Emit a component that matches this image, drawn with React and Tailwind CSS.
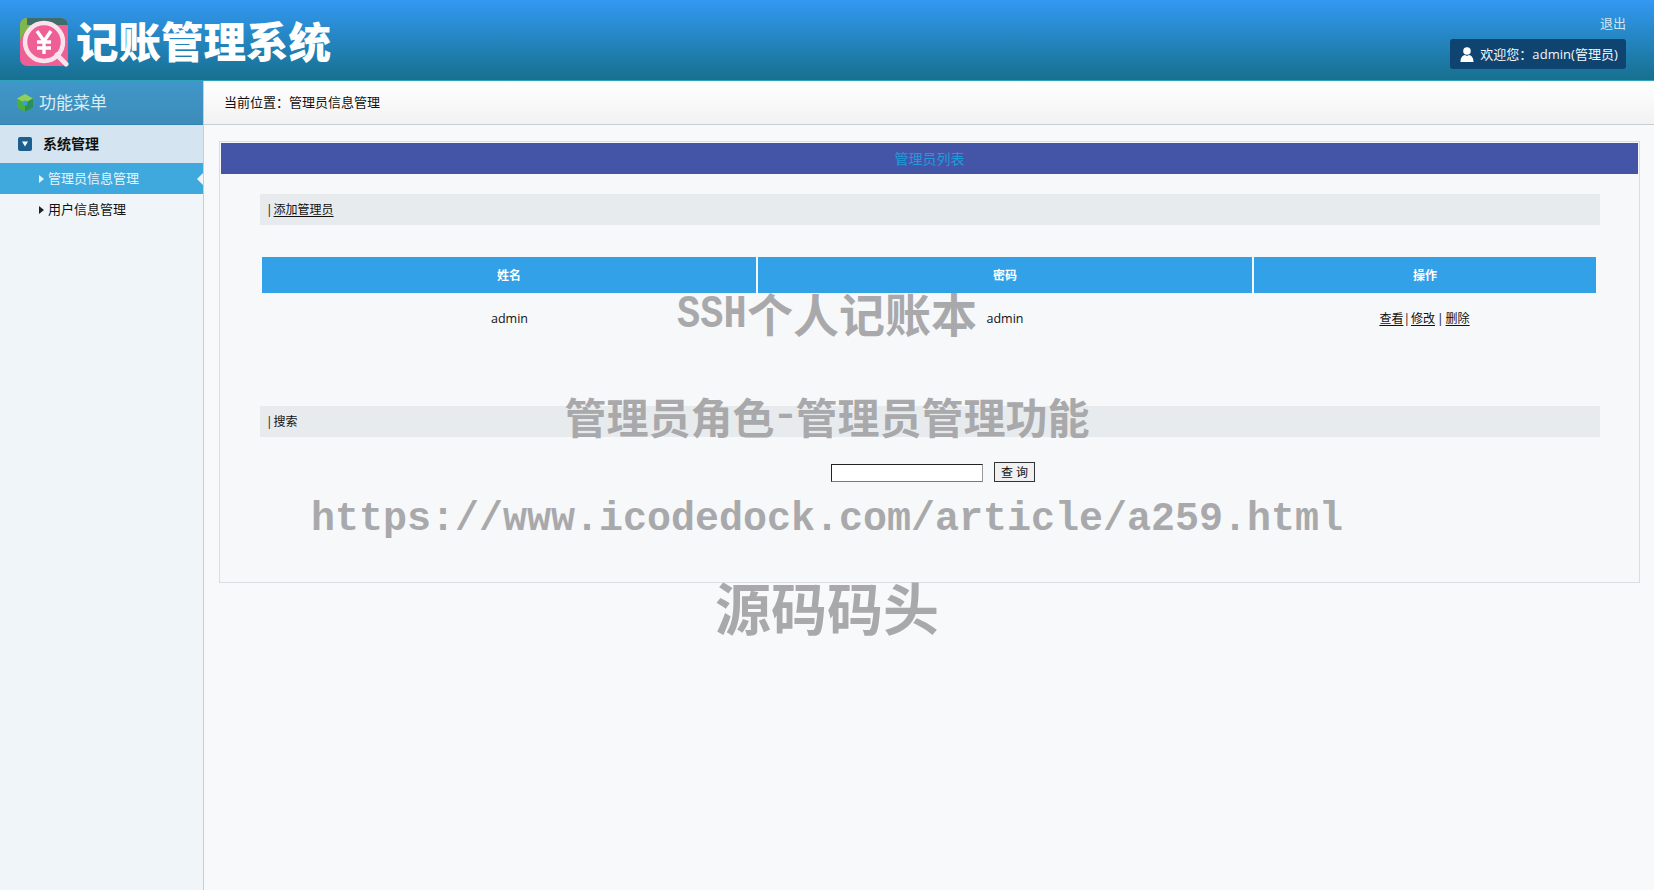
import React from "react";

function Logo() {
  return (
    <svg width="50" height="50" viewBox="0 0 50 50" className="shrink-0">
      <rect x="1" y="1" width="48" height="48" rx="7" fill="#ee5f96" />
      <path d="M1 24 V8 a7 7 0 0 1 7 -7 H42 a7 7 0 0 1 7 7 V8 H24 C12 8 4 14 1 24z" fill="#7cb84a" />
      <path d="M8 1 H42 a7 7 0 0 1 7 7 H8z" fill="#3f6d6b" />
      <circle cx="25" cy="25" r="19" fill="#ee5f96" stroke="#fbe3ec" strokeWidth="4.5" />
      <path d="M38 38 L47 47" stroke="#fbe3ec" strokeWidth="5" strokeLinecap="round" />
      <path d="M18 14 L25 24 L32 14 M25 24 V37 M18 25 H32 M18 31 H32" stroke="#fff" strokeWidth="3.4" fill="none" />
    </svg>
  );
}

function Cube() {
  return (
    <svg width="18" height="20" viewBox="0 0 18 20" className="shrink-0">
      <path d="M9 1 L17 5.5 V14.5 L9 19 L1 14.5 V5.5z" fill="#4caf3c" />
      <path d="M9 1 L17 5.5 L9 10 L1 5.5z" fill="#8ed05a" />
      <path d="M9 10 L17 5.5 V14.5 L9 19z" fill="#2a8f5f" />
      <circle cx="9" cy="10" r="2.6" fill="#3f9fc8" />
    </svg>
  );
}

function Mark({ children }) {
  return <span className="[font-family:'Noto_Sans_CJK_SC',sans-serif]">{children}</span>;
}

export default function App() {
  return (
    <div className="relative flex h-[890px] w-[1654px] flex-col overflow-hidden bg-[#f8f9fa] text-[13px] leading-none text-[#111] [font-family:'Open_Sans','Noto_Sans_CJK_SC',sans-serif]">
      <header className="flex h-[81px] shrink-0 items-start justify-between border-b border-[#2fa3bb] bg-gradient-to-b from-[#3399f3] to-[#17708f] pl-[19px] pr-[28px]">
        <div className="flex items-start gap-[7px] pt-[17px]">
          <Logo />
          <span className="-mt-[2px] text-[42.5px] font-black leading-[50px] text-white [font-family:'Noto_Sans_CJK_SC',sans-serif]">记账管理系统</span>
        </div>
        <div className="flex flex-col items-end gap-[8px] pt-[16px]">
          <a className="text-[13px] leading-[15px] text-[#cfe6f5]">退出</a>
          <div className="flex h-[30px] items-center gap-[6px] rounded-[3px] bg-[#0f4470] pl-[10px] pr-[8px] text-[13px] text-[#f2f7fb]">
            <svg width="14" height="15" viewBox="0 0 14 15">
              <circle cx="7" cy="4" r="3.8" fill="#fff" />
              <path d="M0.5 15 C0.5 10 3 8.5 5 8 L7 9 L9 8 C11 8.5 13.5 10 13.5 15z" fill="#fff" />
            </svg>
            <span className="tracking-[0.05px]">欢迎您：admin(管理员)</span>
          </div>
        </div>
      </header>

      <div className="flex min-h-0 flex-1">
        <aside className="flex w-[204px] shrink-0 flex-col border-r border-[#c9cdd1] bg-[#f0f5f9]">
          <div className="flex h-[44px] items-center gap-[5px] border-b border-[#2f83ad] bg-gradient-to-b from-[#3f97c9] to-[#3d8cba] pl-[16px] text-[17px] text-[#d9edf7]">
            <Cube />
            <span>功能菜单</span>
          </div>
          <div className="flex h-[38px] items-center gap-[11px] bg-[#d4e5f1] pl-[18px] text-[14px] font-bold text-[#111]">
            <span className="flex h-[14px] w-[14px] items-center justify-center rounded-[2px] bg-[#1a5f8f]">
              <svg width="8" height="6" viewBox="0 0 8 6"><path d="M1 0.5 H7 L4 5.5z" fill="#fff" /></svg>
            </span>
            <span>系统管理</span>
          </div>
          <div className="relative flex h-[31px] items-center gap-[4px] bg-[#3fa9de] pl-[39px] text-[#e8f5fb]">
            <svg width="5" height="8" viewBox="0 0 5 8"><path d="M0 0 L5 4 L0 8z" fill="#e8f5fb" /></svg>
            <span>管理员信息管理</span>
            <span className="absolute right-0 top-1/2 h-0 w-0 -translate-y-1/2 border-y-[6px] border-r-[6px] border-y-transparent border-r-[#f0f5f9]" />
          </div>
          <div className="flex h-[31px] items-center gap-[4px] pl-[39px] text-[#111]">
            <svg width="5" height="8" viewBox="0 0 5 8"><path d="M0 0 L5 4 L0 8z" fill="#222" /></svg>
            <span>用户信息管理</span>
          </div>
        </aside>

        <main className="min-w-0 flex-1">
          <div className="flex h-[44px] items-center border-b border-[#c9cdd1] bg-gradient-to-b from-white to-[#f2f2f2] pl-[20px]">
            当前位置：管理员信息管理
          </div>
          <section className="ml-[15px] mr-[14px] mt-[16px] h-[442px] border border-[#d9dee5] bg-[#f6f8fa] p-[1px]">
            <div className="flex h-[31px] items-center justify-center bg-[#4455a8] text-[14px] text-[#1f9bd8]">管理员列表</div>
            <div className="ml-[39px] mr-[38px] mt-[20px] flex h-[31px] items-center gap-[1px] bg-[#e8ebee] pl-[6px] text-[12px]">
              <span>|</span><a className="underline underline-offset-2">添加管理员</a>
            </div>
            <table className="ml-[41px] mt-[32px] w-[1334px] table-fixed border-collapse">
              <thead>
                <tr className="h-[36px] text-[12px] font-bold text-white">
                  <th className="w-[495px] border-r-2 border-[#f2f7fa] bg-[#33a1e8] pt-[2px]">姓名</th>
                  <th className="w-[496px] border-r-2 border-[#f2f7fa] bg-[#33a1e8] pt-[2px]">密码</th>
                  <th className="bg-[#33a1e8] pt-[2px]">操作</th>
                </tr>
              </thead>
              <tbody>
                <tr className="h-[50px] text-center text-[12.5px]">
                  <td className="pt-[2px]">admin</td>
                  <td className="pt-[2px]">admin</td>
                  <td className="pt-[2px] text-[12px]"><a className="underline underline-offset-2">查看</a>|<a className="ml-[1px] underline underline-offset-2">修改</a><span className="mx-[2px]">|</span><a className="underline underline-offset-2">删除</a></td>
                </tr>
              </tbody>
            </table>
            <div className="ml-[39px] mr-[38px] mt-[63px] flex h-[31px] items-center gap-[1px] bg-[#e8ebee] pl-[6px] text-[12px]">
              <span>|</span><span>搜索</span>
            </div>
            <div className="mt-[25px] flex items-end pl-[610px]">
              <input className="h-[18px] w-[152px] border border-b-[#777] border-l-[#222] border-r-[#999] border-t-[#222] bg-white" />
              <button className="ml-[11px] h-[20px] w-[41px] border border-[#333] bg-[#f0f0f0] pl-[3px] pt-[2px] text-[12px] tracking-[3px]">查询</button>
            </div>
          </section>
        </main>
      </div>

      <div className="pointer-events-none absolute inset-0 flex flex-col items-center font-bold text-[#a9a9ab] [font-family:'Liberation_Mono','Noto_Sans_CJK_SC',monospace]">
        <div className="mt-[284px] flex h-[56px] items-center">
          <span className="inline-block w-[70px] origin-left translate-y-[3px] scale-x-[0.84] text-[46px]">SSH</span>
          <Mark><span className="text-[46px]">个人记账本</span></Mark>
        </div>
        <div className="mt-[48px] flex h-[56px] items-center text-[42px]">
          <Mark>管理员角色</Mark>
          <span className="inline-block w-[21px] scale-x-[1.3] text-center text-[35px]">-</span>
          <Mark>管理员管理功能</Mark>
        </div>
        <div className="mt-[48px] flex h-[56px] items-center text-[40px]">https://www.icodedock.com/article/a259.html</div>
        <div className="mt-[28px] flex h-[60px] items-center text-[56px]"><Mark>源码码头</Mark></div>
      </div>
    </div>
  );
}
